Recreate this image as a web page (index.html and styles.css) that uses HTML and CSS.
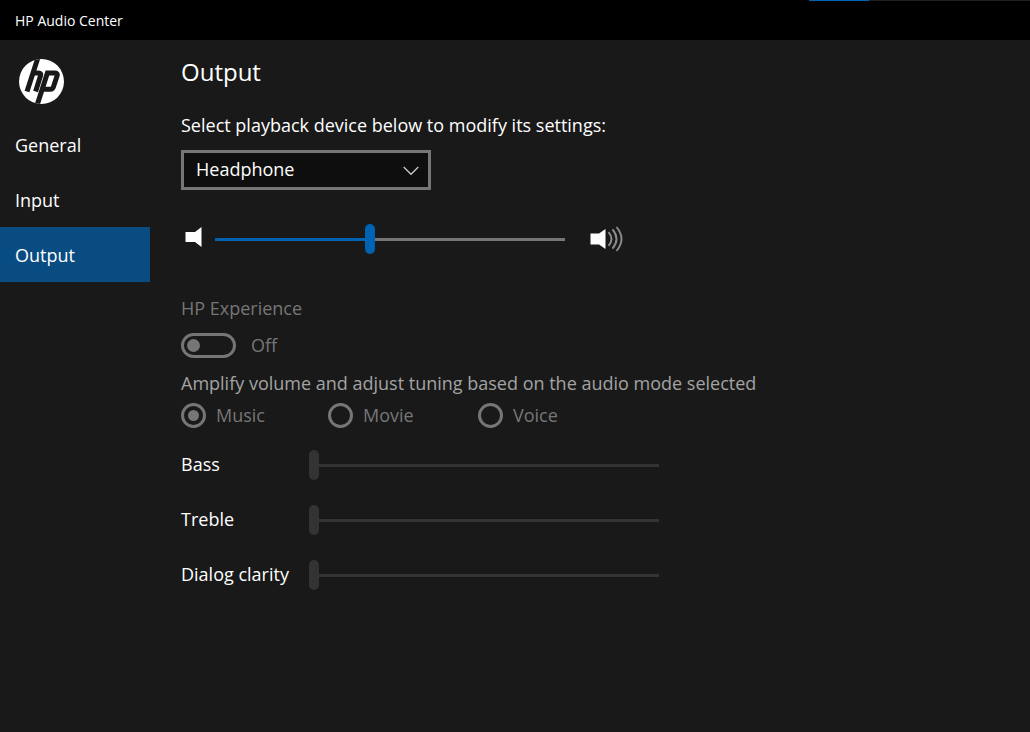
FILE: index.html
```
<!DOCTYPE html>
<html lang="en">
<head>
  <meta charset="UTF-8" />
  <meta name="viewport" content="width=device-width, initial-scale=1" />
  <title>HP Audio Center</title>
  <link rel="stylesheet" href="styles.css">
</head>
<body>
  <header class="titlebar">
    <span>HP Audio Center</span>
    <div class="titlebar-strip"></div>
  </header>

  <div class="app">
    <aside class="sidebar">
      <svg class="logo" viewBox="0 0 45 45" role="img" aria-label="HP">
        <defs>
          <clipPath id="disc"><circle cx="22.5" cy="22.5" r="22.5" /></clipPath>
        </defs>
        <circle cx="22.5" cy="22.5" r="22.5" fill="#fff" />
        <g clip-path="url(#disc)" fill="none" stroke="#191919" stroke-width="5">
          <path d="M19.5 -3 L8 32.5" />
          <path d="M14 14 H19.5 Q22.4 14 21.6 16.6 L16.6 32.5" />
          <path d="M17.5 48 L28.4 14 H35.5 Q39 14 38.1 16.8 L34.4 28 Q33.6 30.3 31.2 30.3 H24" />
        </g>
      </svg>
      <nav class="nav">
        <a href="#general">General</a>
        <a href="#input">Input</a>
        <a href="#output" class="active" aria-current="page">Output</a>
      </nav>
    </aside>

    <main class="content">
      <h1>Output</h1>

      <label class="device-label" for="device">Select playback device below to modify its settings:</label>
      <div class="select-box">
        <select id="device" name="device">
          <option>Headphone</option>
          <option>Speakers</option>
        </select>
        <svg class="chevron" viewBox="0 0 16 10" aria-hidden="true">
          <path d="M0.7 1 L8 8.3 L15.3 1" fill="none" stroke="#c8c8c8" stroke-width="1.3" />
        </svg>
      </div>

      <div class="volume">
        <svg class="speaker-low" viewBox="0 0 17 20" aria-hidden="true">
          <path d="M0.5 5 H10 L16.5 0 V20 L10 15 H0.5 Z" fill="#fff" />
        </svg>
        <input type="range" class="slider" id="volume" min="0" max="100" value="44" aria-label="Volume" />
        <svg class="speaker-high" viewBox="0 0 34 26" aria-hidden="true">
          <path d="M0.5 7.5 H9 L15.5 3 V23 L9 18.5 H0.5 Z" fill="#fff" />
          <g fill="none" stroke="#8c8c8c" stroke-width="1.9">
            <path d="M18.5 6.2 Q24.5 13 18.5 19.8" />
            <path d="M22.5 3.4 Q30.5 13 22.5 22.6" />
            <path d="M26.5 1 Q36.5 13 26.5 25" />
          </g>
        </svg>
      </div>

      <label class="muted experience-label" for="experience">HP Experience</label>
      <div class="toggle-row">
        <input type="checkbox" class="toggle" id="experience" role="switch" disabled />
        <span class="muted">Off</span>
      </div>

      <fieldset class="modes" disabled>
        <legend>Amplify volume and adjust tuning based on the audio mode selected</legend>
        <div class="mode-list">
          <label><input type="radio" name="mode" value="music" checked />Music</label>
          <label><input type="radio" name="mode" value="movie" />Movie</label>
          <label><input type="radio" name="mode" value="voice" />Voice</label>
        </div>
      </fieldset>

      <div class="tuning">
        <label for="bass">Bass</label>
        <input type="range" class="slider" id="bass" min="0" max="100" value="0" disabled />
        <label for="treble">Treble</label>
        <input type="range" class="slider" id="treble" min="0" max="100" value="0" disabled />
        <label for="clarity">Dialog clarity</label>
        <input type="range" class="slider" id="clarity" min="0" max="100" value="0" disabled />
      </div>
    </main>
  </div>

<script>
  const volume = document.getElementById('volume');

  function paintVolume() {
    volume.style.setProperty('--fill', volume.value + '%');
  }

  volume.addEventListener('input', paintVolume);
  paintVolume();
</script>
</body>
</html>
```

FILE: styles.css
```
* {
  box-sizing: border-box;
}
body {
  margin: 0;
  min-height: 100vh;
  display: flex;
  flex-direction: column;
  background: #191919;
  color: #fff;
  font-family: "Open Sans", "Noto Sans", sans-serif;
  font-size: 18px;
  line-height: 25px;
}
.titlebar {
  position: relative;
  height: 40px;
  padding: 0 15px;
  display: flex;
  align-items: center;
  background: #000;
  font-size: 14px;
}
.titlebar-strip {
  position: absolute;
  top: 0;
  right: 0;
  width: 221px;
  height: 1px;
  background: linear-gradient(to right, #0063b1 60px, #1f1f1f 60px);
}
.app {
  flex: 1;
  display: flex;
}
.sidebar {
  width: 150px;
  flex-shrink: 0;
  padding-top: 19px;
}
.logo {
  display: block;
  width: 45px;
  height: 45px;
  margin: 0 0 13px 19px;
}
.nav a {
  display: flex;
  align-items: center;
  height: 55px;
  padding: 2px 15px 0;
  color: #fff;
  text-decoration: none;
}
.nav a.active {
  background: #084c82;
}
.content {
  flex: 1;
  padding: 16px 31px;
}
h1 {
  margin: 0 0 25px;
  font-size: 24px;
  font-weight: 400;
  line-height: 32px;
}
.device-label {
  display: block;
  margin-bottom: 12px;
}
.select-box {
  position: relative;
  width: 250px;
}
select {
  display: block;
  width: 100%;
  height: 40px;
  padding: 0 12px 2px;
  appearance: none;
  background: #0e0e0e;
  border: 3px solid #767676;
  border-radius: 0;
  color: #fff;
  font: inherit;
}
.chevron {
  position: absolute;
  top: 16px;
  right: 12px;
  width: 16px;
  height: 10px;
  pointer-events: none;
}
.volume {
  display: flex;
  align-items: center;
  margin: 34px 0 42px 4px;
}
.speaker-low {
  width: 17px;
  height: 20px;
  margin: 0 13px 4px 0;
}
.speaker-high {
  width: 34px;
  height: 26px;
  margin-left: 25px;
}
.slider {
  --fill: 0%;
  --thumb: #0063b1;
  --track: #767676;
  width: 350px;
  height: 30px;
  margin: 0;
  appearance: none;
  background: none;
}
.slider::-webkit-slider-runnable-track {
  height: 3px;
  background: linear-gradient(to right, #0063b1 var(--fill), var(--track) var(--fill));
}
.slider::-webkit-slider-thumb {
  appearance: none;
  width: 10px;
  height: 30px;
  margin-top: -14px;
  border-radius: 5px;
  background: var(--thumb);
}
.slider:disabled {
  --thumb: #333;
  --track: #333;
}
.muted {
  color: #767676;
}
.experience-label {
  display: block;
  margin-bottom: 12px;
}
.toggle-row {
  display: flex;
  align-items: center;
  gap: 15px;
  margin-bottom: 13px;
}
.toggle {
  display: flex;
  align-items: center;
  width: 55px;
  height: 25px;
  margin: 0;
  padding: 0 3px;
  appearance: none;
  border: 3px solid #767676;
  border-radius: 13px;
}
.toggle::before {
  content: "";
  width: 13px;
  height: 13px;
  border-radius: 50%;
  background: #767676;
}
.modes {
  margin: 0;
  padding: 0;
  border: 0;
}
.modes legend {
  padding: 0;
  margin-bottom: 7px;
  color: #a3a3a3;
}
.mode-list {
  display: grid;
  grid-template-columns: 147px 150px 150px;
  color: #767676;
}
.mode-list label {
  display: flex;
  align-items: center;
  gap: 10px;
}
.mode-list input {
  display: grid;
  place-items: center;
  width: 25px;
  height: 25px;
  margin: 0;
  appearance: none;
  border: 3px solid #767676;
  border-radius: 50%;
}
.mode-list input:checked::before {
  content: "";
  width: 11px;
  height: 11px;
  border-radius: 50%;
  background: #767676;
}
.tuning {
  display: grid;
  grid-template-columns: 128px 350px;
  row-gap: 25px;
  align-items: center;
  margin-top: 22px;
}
.tuning label {
  padding-bottom: 2px;
}
```
